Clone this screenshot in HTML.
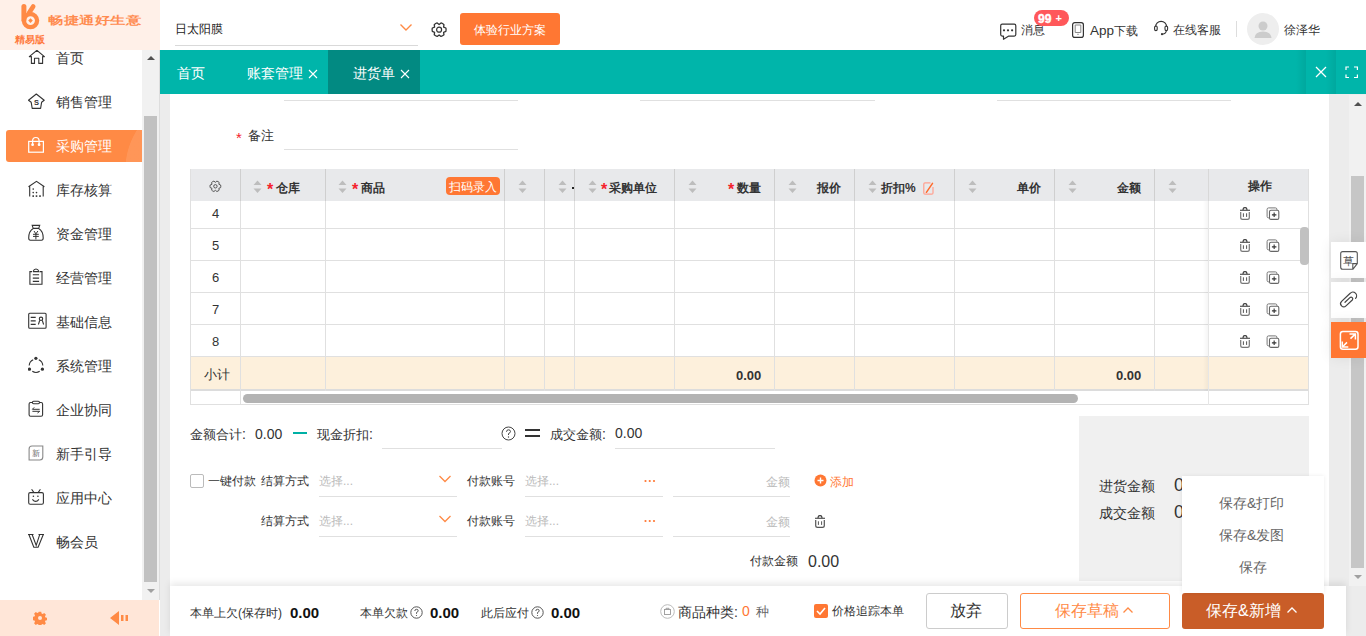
<!DOCTYPE html>
<html><head><meta charset="utf-8">
<style>
*{box-sizing:border-box;margin:0;padding:0}
html,body{width:1366px;height:636px;overflow:hidden;background:#ececec;font-family:"Liberation Sans",sans-serif;color:#333;font-size:14px}
.a{position:absolute}
.t{position:absolute;white-space:nowrap;line-height:1}
/* sidebar */
#side{position:absolute;left:0;top:0;width:160px;height:636px;background:#fff}
#logo{position:absolute;left:0;top:0;width:160px;height:50px;background:#fff0e8}
.mi{position:absolute;left:56px;font-size:14px;color:#333;line-height:1}
.ico{position:absolute;left:28px}
#sbtrack{position:absolute;left:142px;top:50px;width:18px;height:550px;background:#f1f1f1}
#sbthumb{position:absolute;left:144px;top:116px;width:13px;height:466px;background:#c1c1c1}
#sidebot{position:absolute;left:0;top:600px;width:159px;height:36px;background:#ffe6d8}
/* header */
#hdr{position:absolute;left:160px;top:0;width:1206px;height:50px;background:#fff}
#tabs{position:absolute;left:160px;top:50px;width:1206px;height:44px;background:#00b5aa}
#card{position:absolute;left:170px;top:94px;width:1159px;height:541px;background:#fff}
.ul{position:absolute;height:1px;background:#ddd}
/* table */
#tbl{position:absolute;left:190px;top:169px;width:1119px;height:236px;border:1px solid #e0e0e0;background:#fff}
.hrow{position:absolute;left:0;top:0;width:1119px;height:32px;background:#e8e9eb}
.vl{position:absolute;width:1px;background:#dadada}
.hl{position:absolute;height:1px;background:#e0e0e0}
.sort{position:absolute;width:8px;height:14px}
.hd{position:absolute;font-size:12px;font-weight:bold;color:#333;line-height:1}
.req{color:#f5222d}
</style></head>
<body>
<div id="side">
  <div id="logo">
    <svg class="a" style="left:15px;top:2px" width="30" height="32" viewBox="0 0 30 32">
      <g fill="none" stroke="#ff8a45" stroke-linecap="round">
        <path d="M8.9 4.6 V18" stroke-width="5"/>
        <path d="M18.2 4.4 L14 11" stroke-width="4.6"/>
        <circle cx="15.5" cy="18.6" r="6.6" stroke-width="4.3"/>
      </g>
      <path d="M15.5 16.3 L17.8 18.6 L15.5 20.9 L13.2 18.6Z" fill="#ff8a45"/>
    </svg>
    <div class="t" style="left:15px;top:34.5px;font-size:10px;font-weight:bold;color:#ff7a3d">精易版</div>
    <div class="t" style="left:48px;top:13px;font-size:15px;font-weight:bold;color:#ff8c50;letter-spacing:0.5px;transform:scaleY(0.72);transform-origin:50% 50%">畅捷通好生意</div>
  </div>
  <div class="a" style="left:0;top:50px;width:142px;height:550px;overflow:hidden">
    <div class="a" style="left:6px;top:80px;width:136px;height:32px;border-radius:3px 0 0 3px;background:radial-gradient(circle 75px at 194px 40px,rgba(255,255,255,0.1) 99%,rgba(255,255,255,0) 100%),#ff8a45"></div>
    <svg class="a" style="left:28px;top:0" width="20" height="550" viewBox="0 0 20 550" fill="none" stroke="#333" stroke-width="1.1">
      <path d="M1.3 6.6 L8.9 0.3 L16.4 6.6 H14.6 V13.4 H10.8 V8.2 H6.5 V13.4 H3.4 V6.6 Z" stroke-linejoin="round"/>
      <path d="M8.3 44 L0.5 50.2 L3.2 52.3 L4.2 58.4 H12.6 L13.6 52.3 L16.2 50.2 Z" stroke-linejoin="round"/><text x="8.4" y="54.6" font-size="7.5" text-anchor="middle" fill="#333" stroke="none" font-weight="bold">S</text>
      <g stroke="#fff" stroke-width="1.2"><rect x="0.7" y="91.4" width="14.7" height="10.8"/><path d="M4.6 94.7 V91 Q4.6 87.5 7.9 87.5 Q11.1 87.5 11.1 91 V94.7"/><circle cx="4.6" cy="94.7" r="0.8" fill="#fff"/><circle cx="11.1" cy="94.7" r="0.8" fill="#fff"/></g>
      <path d="M0.5 136.8 L8.5 131.3 L16.4 136.8 M1.7 136.5 V146.5 M15.2 136.5 V146.5"/>
      <g fill="#333" stroke="none"><circle cx="5.2" cy="139.1" r="0.8"/><circle cx="5.2" cy="142.6" r="0.8"/><circle cx="8.5" cy="142.6" r="0.8"/><rect x="4.4" y="145.3" width="1.6" height="1.6"/><rect x="7.7" y="145.3" width="1.6" height="1.6"/><rect x="11.2" y="145.3" width="1.6" height="1.6"/></g>
      <path d="M4.2 175.4 H11.7 L10.7 178.4 Q15.2 181 15.2 188 Q15.2 190.2 13.5 190.2 H2.4 Q0.7 190.2 0.7 188 Q0.7 181 5.2 178.4 Z M5.2 178.4 H10.7"/>
      <path d="M6 181 L7.9 183.9 L9.9 181 M7.9 183.9 V189.4 M5 184.3 H10.8 M5 186.4 H10.8" stroke-width="1"/>
      <path d="M4 221.6 H1.9 V234.2 H14 V221.6 H12 M5 221.6 H11 Q10 219 8 219 Q6 219 5 221.6 M4.8 224.8 H11.1 M4.8 228.1 H11.1 M4.8 231.4 H11.1"/>
      <rect x="0.7" y="263.3" width="17.4" height="14.9" rx="1"/><path d="M2.7 267.4 H7.7 M2.7 270.9 H7.7 M2.7 274.4 H7.7 M11.7 270.4 L10.4 274.5 M14.3 270.4 L15.6 274.5"/><circle cx="13" cy="268.8" r="1.7"/>
      <path d="M5.2 309.7 A6.8 6.8 0 0 0 1.2 315.5 M10.8 309.7 A6.8 6.8 0 0 1 14.8 315.5 M4.3 321.3 A6.8 6.8 0 0 0 11.7 321.3"/>
      <g fill="#333" stroke="none"><circle cx="7.9" cy="308.3" r="1.6"/><circle cx="1.5" cy="319.2" r="1.6"/><circle cx="14.4" cy="319.2" r="1.6"/></g>
      <rect x="1.1" y="352.5" width="13.5" height="13.7" rx="1.5"/><rect x="4.4" y="351.3" width="7.1" height="2.5" rx="1.2" fill="#fff"/><path d="M4.4 359.3 H11.7 M4.4 359.3 L6.2 357.4 M4.4 361.3 H11.7 L9.5 363" stroke-width="1"/>
      <path d="M4 396 H14.8 V407 Q14.8 410 11.8 410 H1.1 V399 Q1.1 396 4 396Z" stroke="#888"/><text x="8" y="406.3" font-size="8" text-anchor="middle" fill="#666" stroke="none">新</text>
      <rect x="0.7" y="442.6" width="14.7" height="11.6" rx="1.5"/><path d="M3.6 439.3 L6 442.6 M12.4 439.3 L10.1 442.6 M4.4 449.3 Q7.7 453.5 10.9 449.3"/><g fill="#333" stroke="none"><circle cx="5.4" cy="446.3" r="0.8"/><circle cx="9.9" cy="446.3" r="0.8"/></g>
      <path d="M0 484.5 H5.5 M10.5 484.5 H16 M0.9 484.5 L5.8 497.3 H10.1 L15.3 484.5 M4.2 484.7 L8.2 495.4 L11.7 484.7"/>
    </svg>
    <div class="mi" style="top:1px">首页</div>
    <div class="mi" style="top:45px">销售管理</div>
    <div class="mi" style="top:89px;color:#fff">采购管理</div>
    <div class="mi" style="top:133px">库存核算</div>
    <div class="mi" style="top:177px">资金管理</div>
    <div class="mi" style="top:221px">经营管理</div>
    <div class="mi" style="top:265px">基础信息</div>
    <div class="mi" style="top:309px">系统管理</div>
    <div class="mi" style="top:353px">企业协同</div>
    <div class="mi" style="top:397px">新手引导</div>
    <div class="mi" style="top:441px">应用中心</div>
    <div class="mi" style="top:485px">畅会员</div>
  </div>
  <div id="sbtrack"></div>
  <div id="sbthumb"></div>
  <svg class="a" style="left:144px;top:52px" width="14" height="12"><path d="M3 8 L7 4 L11 8Z" fill="#505050"/></svg>
  <svg class="a" style="left:144px;top:585px" width="14" height="12"><path d="M3 4 L7 8 L11 4Z" fill="#a0a0a0"/></svg>
  <div class="a" style="left:159px;top:50px;width:1px;height:550px;background:#dddddd"></div>
  <div id="sidebot">
    <svg class="a" style="left:33px;top:11px" width="14" height="14" viewBox="0 0 16 16"><path fill="#ff8a45" d="M6.6 0.8h2.8l.4 2 1.3.6 1.7-1.1 2 2-1.1 1.7.6 1.3 2 .4v2.8l-2 .4-.6 1.3 1.1 1.7-2 2-1.7-1.1-1.3.6-.4 2H6.6l-.4-2-1.3-.6-1.7 1.1-2-2 1.1-1.7-.6-1.3-2-.4V6.6l2-.4.6-1.3-1.1-1.7 2-2 1.7 1.1 1.3-.6z"/><circle cx="8" cy="8" r="2.3" fill="#ffe6d8"/></svg>
    <svg class="a" style="left:110px;top:11px" width="19" height="14" viewBox="0 0 19 14"><path fill="#ff8a45" d="M0 7 L9 0 V14Z M11 4 h2.5 v6 H11z M15.5 4 h2.5 v6 h-2.5z"/></svg>
  </div>
</div>
<div id="hdr">
  <div class="t" style="left:15px;top:23px;font-size:12px;color:#222">日太阳膜</div>
  <div class="ul" style="left:15px;top:45px;width:243px;background:#d9d9d9"></div>
  <svg class="a" style="left:239px;top:21px" width="14" height="12"><path d="M1.5 3.5 L7 9 L12.5 3.5" fill="none" stroke="#ff8a45" stroke-width="1.4"/></svg>
  <svg class="a" style="left:270px;top:20.5px" width="18" height="18" viewBox="0 0 18 18"><path d="M15.89 7.01 A7.0 7.0 0 0 1 15.89 10.39 L13.60 11.30 L13.96 13.74 A7.0 7.0 0 0 1 11.03 15.43 L9.10 13.90 L7.17 15.43 A7.0 7.0 0 0 1 4.24 13.74 L4.60 11.30 L2.31 10.39 A7.0 7.0 0 0 1 2.31 7.01 L4.60 6.10 L4.24 3.66 A7.0 7.0 0 0 1 7.17 1.97 L9.10 3.50 L11.03 1.97 A7.0 7.0 0 0 1 13.96 3.66 L13.60 6.10 Z" fill="none" stroke="#333" stroke-width="1.3" stroke-linejoin="round"/><circle cx="9.1" cy="8.7" r="2.5" fill="none" stroke="#333" stroke-width="1.2"/></svg>
  <div class="a" style="left:300px;top:13px;width:100px;height:32px;border-radius:3px;background:#ff7733"></div>
  <div class="t" style="left:314px;top:24px;font-size:12px;color:#fff">体验行业方案</div>

  <!-- right -->
  <svg class="a" style="left:839px;top:22px" width="19" height="19" viewBox="0 0 19 19"><path d="M3.2 2.2 H15.3 Q16.8 2.2 16.8 3.7 V12.6 Q16.8 14.1 15.3 14.1 H9.8 L4.5 17.3 V14.1 H3.2 Q1.7 14.1 1.7 12.6 V3.7 Q1.7 2.2 3.2 2.2Z" fill="none" stroke="#333" stroke-width="1.2" stroke-linejoin="round"/><circle cx="5" cy="8.3" r="1.1" fill="#333"/><circle cx="9" cy="8.3" r="1.1" fill="#333"/><circle cx="13.1" cy="8.3" r="1.1" fill="#333"/></svg>
  <div class="t" style="left:861px;top:24px;font-size:12px;color:#333">消息</div>
  <div class="a" style="left:874px;top:10px;width:35px;height:16px;border-radius:8px;background:#ff585a"></div>
  <div class="t" style="left:878px;top:13px;font-size:12px;font-weight:bold;color:#fff;-webkit-text-stroke:0.4px #fff">99</div>
  <div class="t" style="left:895.5px;top:13px;font-size:11px;font-weight:bold;color:#fff">+</div>
  <svg class="a" style="left:910px;top:21px" width="16" height="18" viewBox="0 0 16 18"><rect x="2.6" y="1.6" width="10.8" height="14.8" rx="2.2" fill="none" stroke="#333" stroke-width="1.2"/><path d="M5.2 4 H10.8 V11.5 H5.2Z" fill="none" stroke="#888" stroke-width="1"/><path d="M7 13.3 h2" stroke="#aaa" stroke-width="1"/></svg>
  <div class="t" style="left:930px;top:24px;font-size:12px;color:#333"><span style="font-size:13.5px">App</span>下载</div>
  <svg class="a" style="left:993px;top:20px" width="17" height="17" viewBox="0 0 17 17"><path d="M2.6 6.8 A5.5 5.5 0 0 1 13.6 6.8" fill="none" stroke="#333" stroke-width="1.2"/><rect x="1.6" y="6" width="2.6" height="4.6" rx="1.3" fill="none" stroke="#333" stroke-width="1.1"/><rect x="12" y="6" width="2.6" height="4.6" rx="1.3" fill="none" stroke="#333" stroke-width="1.1"/><path d="M13.3 10.8 Q13 13.8 9.5 14.2" fill="none" stroke="#333" stroke-width="1.1"/><circle cx="9" cy="14.2" r="1.1" fill="#333"/></svg>
  <div class="t" style="left:1013px;top:24px;font-size:12px;color:#333">在线客服</div>
  <div class="a" style="left:1076px;top:21px;width:1px;height:16px;background:#ddd"></div>
  <div class="a" style="left:1087px;top:13px;width:32px;height:32px;border-radius:50%;background:#eee;overflow:hidden">
    <svg width="32" height="32" viewBox="0 0 32 32"><circle cx="16" cy="13" r="4.5" fill="#ccc"/><path d="M7.5 25 Q8 18.5 16 18.5 Q24 18.5 24.5 25 Z" fill="#ccc"/></svg>
  </div>
  <div class="t" style="left:1124px;top:24px;font-size:12px;color:#333">徐泽华</div>
</div>
<div id="tabs">
  <div class="t" style="left:17px;top:16px;font-size:14px;color:#fff">首页</div>
  <div class="t" style="left:87px;top:16px;font-size:14px;color:#fff">账套管理</div>
  <svg class="a" style="left:148px;top:19px" width="11" height="11"><path d="M1 1 L9 9 M9 1 L1 9" stroke="#fff" stroke-width="1.1"/></svg>
  <div class="a" style="left:168px;top:0;width:92px;height:45px;background:#028a82"></div>
  <div class="t" style="left:193px;top:16px;font-size:14px;color:#fff">进货单</div>
  <svg class="a" style="left:240px;top:19px" width="11" height="11"><path d="M1 1 L9 9 M9 1 L1 9" stroke="#fff" stroke-width="1.1"/></svg>
  <div class="a" style="left:1136px;top:0;width:10px;height:44px;background:linear-gradient(90deg,rgba(0,0,0,0),rgba(0,0,0,0.07))"></div>
  <div class="a" style="left:1166px;top:0;width:10px;height:44px;background:linear-gradient(90deg,rgba(0,0,0,0),rgba(0,0,0,0.07))"></div>
  <svg class="a" style="left:1155px;top:16px" width="12" height="12"><path d="M1 1 L11 11 M11 1 L1 11" stroke="#fff" stroke-width="1.3"/></svg>
  <svg class="a" style="left:1185px;top:16px" width="14" height="14"><path d="M1 4 V1 H4 M9 1 H12.4 V4 M12.4 8.5 V11.5 H9 M4 11.5 H1 V8.5" fill="none" stroke="#fff" stroke-width="1.2"/></svg>
</div>
<div id="card"></div>
<div class="ul" style="left:284px;top:100px;width:234px;background:#e0e0e0"></div>
<div class="ul" style="left:640px;top:100px;width:235px;background:#e0e0e0"></div>
<div class="ul" style="left:997px;top:100px;width:234px;background:#e0e0e0"></div>
<div class="t" style="left:236px;top:130px;font-size:15px;color:#f5222d">*</div>
<div class="t" style="left:248px;top:129.5px;font-size:12.5px;color:#333">备注</div>
<div class="ul" style="left:284px;top:149px;width:234px;background:#e0e0e0"></div>
<div class="a" style="left:190px;top:169px;width:1119px;height:32px;background:#e8e9eb"></div>
<div class="a" style="left:190px;top:357px;width:1119px;height:33px;background:#fdf0dc"></div>
<div class="hl" style="left:190px;top:228px;width:1119px"></div>
<div class="hl" style="left:190px;top:260px;width:1119px"></div>
<div class="hl" style="left:190px;top:292px;width:1119px"></div>
<div class="hl" style="left:190px;top:324px;width:1119px"></div>
<div class="hl" style="left:190px;top:356px;width:1119px"></div>
<div class="a" style="left:190px;top:389px;width:1119px;height:2px;background:#dcdcdc"></div>
<div class="hl" style="left:190px;top:404px;width:1119px"></div>
<div class="vl" style="left:190px;top:169px;height:236px;background:#e0e0e0"></div>
<div class="vl" style="left:240px;top:169px;height:32px;background:#cfcfcf"></div>
<div class="vl" style="left:240px;top:201px;height:204px;background:#e0e0e0"></div>
<div class="vl" style="left:325px;top:169px;height:32px;background:#cfcfcf"></div>
<div class="vl" style="left:325px;top:201px;height:190px;background:#e0e0e0"></div>
<div class="vl" style="left:504px;top:169px;height:32px;background:#cfcfcf"></div>
<div class="vl" style="left:504px;top:201px;height:190px;background:#e0e0e0"></div>
<div class="vl" style="left:544px;top:169px;height:32px;background:#cfcfcf"></div>
<div class="vl" style="left:544px;top:201px;height:190px;background:#e0e0e0"></div>
<div class="vl" style="left:574px;top:169px;height:32px;background:#cfcfcf"></div>
<div class="vl" style="left:574px;top:201px;height:190px;background:#e0e0e0"></div>
<div class="vl" style="left:674px;top:169px;height:32px;background:#cfcfcf"></div>
<div class="vl" style="left:674px;top:201px;height:190px;background:#e0e0e0"></div>
<div class="vl" style="left:774px;top:169px;height:32px;background:#cfcfcf"></div>
<div class="vl" style="left:774px;top:201px;height:190px;background:#e0e0e0"></div>
<div class="vl" style="left:854px;top:169px;height:32px;background:#cfcfcf"></div>
<div class="vl" style="left:854px;top:201px;height:190px;background:#e0e0e0"></div>
<div class="vl" style="left:954px;top:169px;height:32px;background:#cfcfcf"></div>
<div class="vl" style="left:954px;top:201px;height:190px;background:#e0e0e0"></div>
<div class="vl" style="left:1054px;top:169px;height:32px;background:#cfcfcf"></div>
<div class="vl" style="left:1054px;top:201px;height:190px;background:#e0e0e0"></div>
<div class="vl" style="left:1154px;top:169px;height:32px;background:#cfcfcf"></div>
<div class="vl" style="left:1154px;top:201px;height:190px;background:#e0e0e0"></div>
<div class="vl" style="left:1208px;top:169px;height:32px;background:#d8d8d8"></div>
<div class="vl" style="left:1208px;top:201px;height:204px;background:#e6e6e6"></div>
<div class="vl" style="left:1308px;top:169px;height:236px;background:#e0e0e0"></div>
<svg class="a" style="left:253px;top:180px" width="9" height="14" viewBox="0 0 9 14"><path d="M4.5 0.5 L8.5 5 H0.5Z M0.5 8.5 H8.5 L4.5 13Z" fill="#bdbdbd"/></svg>
<svg class="a" style="left:338px;top:180px" width="9" height="14" viewBox="0 0 9 14"><path d="M4.5 0.5 L8.5 5 H0.5Z M0.5 8.5 H8.5 L4.5 13Z" fill="#bdbdbd"/></svg>
<svg class="a" style="left:518px;top:180px" width="9" height="14" viewBox="0 0 9 14"><path d="M4.5 0.5 L8.5 5 H0.5Z M0.5 8.5 H8.5 L4.5 13Z" fill="#bdbdbd"/></svg>
<svg class="a" style="left:558px;top:180px" width="9" height="14" viewBox="0 0 9 14"><path d="M4.5 0.5 L8.5 5 H0.5Z M0.5 8.5 H8.5 L4.5 13Z" fill="#bdbdbd"/></svg>
<svg class="a" style="left:588px;top:180px" width="9" height="14" viewBox="0 0 9 14"><path d="M4.5 0.5 L8.5 5 H0.5Z M0.5 8.5 H8.5 L4.5 13Z" fill="#bdbdbd"/></svg>
<svg class="a" style="left:688px;top:180px" width="9" height="14" viewBox="0 0 9 14"><path d="M4.5 0.5 L8.5 5 H0.5Z M0.5 8.5 H8.5 L4.5 13Z" fill="#bdbdbd"/></svg>
<svg class="a" style="left:788px;top:180px" width="9" height="14" viewBox="0 0 9 14"><path d="M4.5 0.5 L8.5 5 H0.5Z M0.5 8.5 H8.5 L4.5 13Z" fill="#bdbdbd"/></svg>
<svg class="a" style="left:868px;top:180px" width="9" height="14" viewBox="0 0 9 14"><path d="M4.5 0.5 L8.5 5 H0.5Z M0.5 8.5 H8.5 L4.5 13Z" fill="#bdbdbd"/></svg>
<svg class="a" style="left:968px;top:180px" width="9" height="14" viewBox="0 0 9 14"><path d="M4.5 0.5 L8.5 5 H0.5Z M0.5 8.5 H8.5 L4.5 13Z" fill="#bdbdbd"/></svg>
<svg class="a" style="left:1068px;top:180px" width="9" height="14" viewBox="0 0 9 14"><path d="M4.5 0.5 L8.5 5 H0.5Z M0.5 8.5 H8.5 L4.5 13Z" fill="#bdbdbd"/></svg>
<svg class="a" style="left:1168px;top:180px" width="9" height="14" viewBox="0 0 9 14"><path d="M4.5 0.5 L8.5 5 H0.5Z M0.5 8.5 H8.5 L4.5 13Z" fill="#bdbdbd"/></svg>
<svg class="a" style="left:208px;top:179px" width="14" height="15" viewBox="0 0 14 15"><path d="M12.64 5.99 A5.4 5.4 0 0 1 12.64 8.61 L10.86 9.30 L11.15 11.18 A5.4 5.4 0 0 1 8.89 12.49 L7.40 11.30 L5.91 12.49 A5.4 5.4 0 0 1 3.65 11.18 L3.94 9.30 L2.16 8.61 A5.4 5.4 0 0 1 2.16 5.99 L3.94 5.30 L3.65 3.42 A5.4 5.4 0 0 1 5.91 2.11 L7.40 3.30 L8.89 2.11 A5.4 5.4 0 0 1 11.15 3.42 L10.86 5.30 Z" fill="none" stroke="#555" stroke-width="1" stroke-linejoin="round"/><circle cx="7.4" cy="7.3" r="1.7" fill="none" stroke="#555" stroke-width="1"/></svg>
<div class="hd req" style="left:267px;top:182px;font-size:16px">*</div>
<div class="hd" style="left:276px;top:182px">仓库</div>
<div class="hd req" style="left:352px;top:182px;font-size:16px">*</div>
<div class="hd" style="left:361px;top:182px">商品</div>
<div class="hd req" style="left:601px;top:182px;font-size:16px">*</div>
<div class="hd" style="left:609px;top:182px">采购单位</div>
<div class="hd req" style="left:728px;top:182px;font-size:16px">*</div>
<div class="hd" style="left:737px;top:182px">数量</div>
<div class="hd" style="left:817px;top:182px">报价</div>
<div class="hd" style="left:881px;top:182px">折扣%</div>
<div class="hd" style="left:1017px;top:182px">单价</div>
<div class="hd" style="left:1117px;top:182px">金额</div>
<div class="hd" style="left:1248px;top:179.5px">操作</div>

<div class="a" style="left:446px;top:177px;width:54px;height:18px;border-radius:4px;background:#ff7733"></div>
<div class="t" style="left:449px;top:180.5px;font-size:12px;color:#fff">扫码录入</div>
<div class="a" style="left:572px;top:187px;width:2px;height:2px;background:#222"></div>




<svg class="a" style="left:922px;top:181px" width="13" height="15" viewBox="0 0 13 15"><path d="M8.5 1.8 H3 Q1.8 1.8 1.8 3 V12 Q1.8 13.2 3 13.2 H9.8 Q11 13.2 11 12 V6" fill="none" stroke="#ffa090" stroke-width="1.2"/><path d="M4.4 11.3 L10.5 2.3" stroke="#ff6a2a" stroke-width="1.5" stroke-linecap="round"/></svg>


<div class="a" style="left:1203px;top:201px;width:5px;height:190px;background:linear-gradient(90deg,rgba(0,0,0,0),rgba(0,0,0,0.04))"></div>

<div class="t" style="left:212px;top:207px;font-size:13px;color:#333">4</div>
<svg class="a" style="left:1239px;top:206px" width="12" height="15" viewBox="0 0 12 15"><path d="M1 4.2 H11 M4.1 4.2 V3 Q4.1 1.6 6 1.6 Q7.9 1.6 7.9 3 V4.2" fill="none" stroke="#333" stroke-width="1.1"/><path d="M1.7 6 V11.5 Q1.7 13.4 3.6 13.4 H8.4 Q10.3 13.4 10.3 11.5 V6" fill="none" stroke="#777" stroke-width="1.2"/><path d="M4.4 7.3 V10.9 M7.6 7.3 V10.9" stroke="#555" stroke-width="1"/></svg>
<svg class="a" style="left:1266px;top:206px" width="14" height="15" viewBox="0 0 14 15"><path d="M3.3 11.9 H2.6 Q1.1 11.9 1.1 10.4 V3.4 Q1.1 1.9 2.6 1.9 H9.4 Q10.9 1.9 10.9 3.4 V4" fill="none" stroke="#777" stroke-width="1"/><rect x="3.5" y="4.3" width="9.3" height="9.1" rx="1.5" fill="#fff" stroke="#666" stroke-width="1.1"/><path d="M8.15 6.6 V11.1 M5.9 8.85 H10.4" stroke="#333" stroke-width="1.1"/></svg>
<div class="t" style="left:212px;top:239px;font-size:13px;color:#333">5</div>
<svg class="a" style="left:1239px;top:238px" width="12" height="15" viewBox="0 0 12 15"><path d="M1 4.2 H11 M4.1 4.2 V3 Q4.1 1.6 6 1.6 Q7.9 1.6 7.9 3 V4.2" fill="none" stroke="#333" stroke-width="1.1"/><path d="M1.7 6 V11.5 Q1.7 13.4 3.6 13.4 H8.4 Q10.3 13.4 10.3 11.5 V6" fill="none" stroke="#777" stroke-width="1.2"/><path d="M4.4 7.3 V10.9 M7.6 7.3 V10.9" stroke="#555" stroke-width="1"/></svg>
<svg class="a" style="left:1266px;top:238px" width="14" height="15" viewBox="0 0 14 15"><path d="M3.3 11.9 H2.6 Q1.1 11.9 1.1 10.4 V3.4 Q1.1 1.9 2.6 1.9 H9.4 Q10.9 1.9 10.9 3.4 V4" fill="none" stroke="#777" stroke-width="1"/><rect x="3.5" y="4.3" width="9.3" height="9.1" rx="1.5" fill="#fff" stroke="#666" stroke-width="1.1"/><path d="M8.15 6.6 V11.1 M5.9 8.85 H10.4" stroke="#333" stroke-width="1.1"/></svg>
<div class="t" style="left:212px;top:271px;font-size:13px;color:#333">6</div>
<svg class="a" style="left:1239px;top:270px" width="12" height="15" viewBox="0 0 12 15"><path d="M1 4.2 H11 M4.1 4.2 V3 Q4.1 1.6 6 1.6 Q7.9 1.6 7.9 3 V4.2" fill="none" stroke="#333" stroke-width="1.1"/><path d="M1.7 6 V11.5 Q1.7 13.4 3.6 13.4 H8.4 Q10.3 13.4 10.3 11.5 V6" fill="none" stroke="#777" stroke-width="1.2"/><path d="M4.4 7.3 V10.9 M7.6 7.3 V10.9" stroke="#555" stroke-width="1"/></svg>
<svg class="a" style="left:1266px;top:270px" width="14" height="15" viewBox="0 0 14 15"><path d="M3.3 11.9 H2.6 Q1.1 11.9 1.1 10.4 V3.4 Q1.1 1.9 2.6 1.9 H9.4 Q10.9 1.9 10.9 3.4 V4" fill="none" stroke="#777" stroke-width="1"/><rect x="3.5" y="4.3" width="9.3" height="9.1" rx="1.5" fill="#fff" stroke="#666" stroke-width="1.1"/><path d="M8.15 6.6 V11.1 M5.9 8.85 H10.4" stroke="#333" stroke-width="1.1"/></svg>
<div class="t" style="left:212px;top:303px;font-size:13px;color:#333">7</div>
<svg class="a" style="left:1239px;top:302px" width="12" height="15" viewBox="0 0 12 15"><path d="M1 4.2 H11 M4.1 4.2 V3 Q4.1 1.6 6 1.6 Q7.9 1.6 7.9 3 V4.2" fill="none" stroke="#333" stroke-width="1.1"/><path d="M1.7 6 V11.5 Q1.7 13.4 3.6 13.4 H8.4 Q10.3 13.4 10.3 11.5 V6" fill="none" stroke="#777" stroke-width="1.2"/><path d="M4.4 7.3 V10.9 M7.6 7.3 V10.9" stroke="#555" stroke-width="1"/></svg>
<svg class="a" style="left:1266px;top:302px" width="14" height="15" viewBox="0 0 14 15"><path d="M3.3 11.9 H2.6 Q1.1 11.9 1.1 10.4 V3.4 Q1.1 1.9 2.6 1.9 H9.4 Q10.9 1.9 10.9 3.4 V4" fill="none" stroke="#777" stroke-width="1"/><rect x="3.5" y="4.3" width="9.3" height="9.1" rx="1.5" fill="#fff" stroke="#666" stroke-width="1.1"/><path d="M8.15 6.6 V11.1 M5.9 8.85 H10.4" stroke="#333" stroke-width="1.1"/></svg>
<div class="t" style="left:212px;top:335px;font-size:13px;color:#333">8</div>
<svg class="a" style="left:1239px;top:334px" width="12" height="15" viewBox="0 0 12 15"><path d="M1 4.2 H11 M4.1 4.2 V3 Q4.1 1.6 6 1.6 Q7.9 1.6 7.9 3 V4.2" fill="none" stroke="#333" stroke-width="1.1"/><path d="M1.7 6 V11.5 Q1.7 13.4 3.6 13.4 H8.4 Q10.3 13.4 10.3 11.5 V6" fill="none" stroke="#777" stroke-width="1.2"/><path d="M4.4 7.3 V10.9 M7.6 7.3 V10.9" stroke="#555" stroke-width="1"/></svg>
<svg class="a" style="left:1266px;top:334px" width="14" height="15" viewBox="0 0 14 15"><path d="M3.3 11.9 H2.6 Q1.1 11.9 1.1 10.4 V3.4 Q1.1 1.9 2.6 1.9 H9.4 Q10.9 1.9 10.9 3.4 V4" fill="none" stroke="#777" stroke-width="1"/><rect x="3.5" y="4.3" width="9.3" height="9.1" rx="1.5" fill="#fff" stroke="#666" stroke-width="1.1"/><path d="M8.15 6.6 V11.1 M5.9 8.85 H10.4" stroke="#333" stroke-width="1.1"/></svg>
<div class="t" style="left:204px;top:368px;font-size:13px;color:#333">小计</div>
<div class="t" style="left:736px;top:369px;font-size:13px;font-weight:bold;color:#333">0.00</div>
<div class="t" style="left:1116px;top:369px;font-size:13px;font-weight:bold;color:#333">0.00</div>
<div class="a" style="left:243px;top:394px;width:835px;height:9px;border-radius:5px;background:#b3b3b3"></div>
<div class="a" style="left:1300px;top:227px;width:9px;height:38px;border-radius:4px;background:#c1c1c1"></div>
<!-- summary -->
<div class="t" style="left:190px;top:427px;font-size:13.4px;color:#333">金额合计<span style="font-size:14px">:</span></div>
<div class="t" style="left:255px;top:427px;font-size:14px;color:#333">0.00</div>
<div class="a" style="left:293px;top:432px;width:14px;height:2px;background:#00b0a5"></div>
<div class="t" style="left:317px;top:427px;font-size:13.4px;color:#333">现金折扣<span style="font-size:14px">:</span></div>
<div class="ul" style="left:382px;top:448px;width:120px;background:#e0e0e0"></div>
<svg class="a" style="left:501px;top:426px" width="15" height="15" viewBox="0 0 15 15"><circle cx="7.5" cy="7.5" r="6.5" fill="none" stroke="#444" stroke-width="1"/><path d="M5.5 5.8 Q5.5 3.8 7.5 3.8 Q9.5 3.8 9.5 5.6 Q9.5 6.8 7.5 7.6 V9" fill="none" stroke="#444" stroke-width="1"/><circle cx="7.5" cy="11" r="0.7" fill="#444"/></svg>
<div class="a" style="left:525px;top:429px;width:15px;height:2px;background:#333"></div>
<div class="a" style="left:525px;top:435px;width:15px;height:2px;background:#333"></div>
<div class="t" style="left:550px;top:427px;font-size:13.4px;color:#333">成交金额<span style="font-size:14px">:</span></div>
<div class="t" style="left:615px;top:426px;font-size:14px;color:#333">0.00</div>
<div class="ul" style="left:615px;top:448px;width:160px;background:#e0e0e0"></div>

<!-- payment rows -->
<div class="a" style="left:190px;top:474px;width:14px;height:14px;border:1px solid #bbb;border-radius:2px;background:#fff"></div>
<div class="t" style="left:208px;top:475px;font-size:12px;color:#333">一键付款</div>
<div class="t" style="left:261px;top:475px;font-size:12px;color:#333">结算方式</div>
<div class="t" style="left:319px;top:475px;font-size:12px;color:#bbb">选择...</div>
<svg class="a" style="left:438px;top:474px" width="14" height="10"><path d="M1.5 2 L7 7.5 L12.5 2" fill="none" stroke="#ff8a45" stroke-width="1.3"/></svg>
<div class="ul" style="left:319px;top:496px;width:138px;background:#e0e0e0"></div>
<div class="t" style="left:467px;top:475px;font-size:12px;color:#333">付款账号</div>
<div class="t" style="left:525px;top:475px;font-size:12px;color:#bbb">选择...</div>
<svg class="a" style="left:644px;top:479px" width="12" height="4"><circle cx="1.5" cy="2" r="1.1" fill="#ff7733"/><circle cx="5.75" cy="2" r="1.1" fill="#ff7733"/><circle cx="10" cy="2" r="1.1" fill="#ff7733"/></svg>
<div class="ul" style="left:525px;top:496px;width:138px;background:#e0e0e0"></div>
<div class="t" style="left:766px;top:476px;font-size:12px;color:#bbb">金额</div>
<div class="ul" style="left:673px;top:496px;width:117px;background:#e0e0e0"></div>
<svg class="a" style="left:814px;top:474px" width="13" height="13"><circle cx="6.5" cy="6.5" r="6" fill="#ff7733"/><path d="M6.5 3.5 V9.5 M3.5 6.5 H9.5" stroke="#fff" stroke-width="1.4"/></svg>
<div class="t" style="left:830px;top:476px;font-size:12px;color:#ff7733">添加</div>

<div class="t" style="left:261px;top:515px;font-size:12px;color:#333">结算方式</div>
<div class="t" style="left:319px;top:515px;font-size:12px;color:#bbb">选择...</div>
<svg class="a" style="left:438px;top:514px" width="14" height="10"><path d="M1.5 2 L7 7.5 L12.5 2" fill="none" stroke="#ff8a45" stroke-width="1.3"/></svg>
<div class="ul" style="left:319px;top:536px;width:138px;background:#e0e0e0"></div>
<div class="t" style="left:467px;top:515px;font-size:12px;color:#333">付款账号</div>
<div class="t" style="left:525px;top:515px;font-size:12px;color:#bbb">选择...</div>
<svg class="a" style="left:644px;top:519px" width="12" height="4"><circle cx="1.5" cy="2" r="1.1" fill="#ff7733"/><circle cx="5.75" cy="2" r="1.1" fill="#ff7733"/><circle cx="10" cy="2" r="1.1" fill="#ff7733"/></svg>
<div class="ul" style="left:525px;top:536px;width:138px;background:#e0e0e0"></div>
<div class="t" style="left:766px;top:516px;font-size:12px;color:#bbb">金额</div>
<div class="ul" style="left:673px;top:536px;width:117px;background:#e0e0e0"></div>
<svg class="a" style="left:814px;top:514px" width="12" height="15" viewBox="0 0 12 15"><path d="M1 4.2 H11 M4.1 4.2 V3 Q4.1 1.6 6 1.6 Q7.9 1.6 7.9 3 V4.2" fill="none" stroke="#333" stroke-width="1.1"/><path d="M1.7 6 V11.5 Q1.7 13.4 3.6 13.4 H8.4 Q10.3 13.4 10.3 11.5 V6" fill="none" stroke="#555" stroke-width="1.2"/><path d="M4.4 7.3 V10.9 M7.6 7.3 V10.9" stroke="#555" stroke-width="1"/></svg>

<div class="t" style="left:750px;top:555px;font-size:12px;color:#333">付款金额</div>
<div class="t" style="left:808px;top:554px;font-size:16px;color:#333">0.00</div>

<!-- right summary box -->
<div class="a" style="left:1079px;top:416px;width:230px;height:165px;background:#f0f0f0"></div>
<div class="t" style="left:1099px;top:479px;font-size:14px;color:#333">进货金额</div>
<div class="t" style="left:1174px;top:476px;font-size:18px;color:#333">0</div>
<div class="t" style="left:1099px;top:506px;font-size:14px;color:#333">成交金额</div>
<div class="t" style="left:1174px;top:503px;font-size:18px;color:#333">0</div>

<!-- bottom bar -->
<div class="a" style="left:170px;top:586px;width:1176px;height:50px;background:#fff;box-shadow:0 -3px 7px rgba(0,0,0,0.09)"></div>
<div class="t" style="left:190px;top:607px;font-size:12px;color:#333">本单上欠(保存时)</div>
<div class="t" style="left:290px;top:605px;font-size:15px;font-weight:bold;color:#111">0.00</div>
<div class="t" style="left:360px;top:607px;font-size:12px;color:#333">本单欠款</div>
<svg class="a" style="left:410px;top:606px" width="13" height="13" viewBox="0 0 13 13"><circle cx="6.5" cy="6.5" r="5.7" fill="none" stroke="#555" stroke-width="1"/><path d="M4.8 5 Q4.8 3.3 6.5 3.3 Q8.2 3.3 8.2 4.8 Q8.2 5.8 6.5 6.5 V7.8" fill="none" stroke="#555" stroke-width="1"/><circle cx="6.5" cy="9.5" r="0.6" fill="#555"/></svg>
<div class="t" style="left:430px;top:605px;font-size:15px;font-weight:bold;color:#111">0.00</div>
<div class="t" style="left:481px;top:607px;font-size:12px;color:#333">此后应付</div>
<svg class="a" style="left:531px;top:606px" width="13" height="13" viewBox="0 0 13 13"><circle cx="6.5" cy="6.5" r="5.7" fill="none" stroke="#555" stroke-width="1"/><path d="M4.8 5 Q4.8 3.3 6.5 3.3 Q8.2 3.3 8.2 4.8 Q8.2 5.8 6.5 6.5 V7.8" fill="none" stroke="#555" stroke-width="1"/><circle cx="6.5" cy="9.5" r="0.6" fill="#555"/></svg>
<div class="t" style="left:551px;top:605px;font-size:15px;font-weight:bold;color:#111">0.00</div>
<svg class="a" style="left:660px;top:604px" width="15" height="15" viewBox="0 0 15 15"><circle cx="7.5" cy="7.5" r="6.8" fill="none" stroke="#bbb" stroke-width="1"/><rect x="4.5" y="5.5" width="6" height="5" fill="none" stroke="#999" stroke-width="0.9"/><path d="M6 5.5 V4.3 H9 V5.5" fill="none" stroke="#999" stroke-width="0.9"/></svg>
<div class="t" style="left:678px;top:605px;font-size:13.5px;color:#333">商品种类<span style="font-size:14px">:</span></div>
<div class="t" style="left:742px;top:604px;font-size:14px;color:#ff7733">0</div>
<div class="t" style="left:756px;top:605px;font-size:13px;color:#666">种</div>
<div class="a" style="left:814px;top:604px;width:14px;height:14px;border-radius:2px;background:#ff7733"></div>
<svg class="a" style="left:814px;top:604px" width="14" height="14"><path d="M3 7 L6 10 L11 4" fill="none" stroke="#fff" stroke-width="1.6"/></svg>
<div class="t" style="left:832px;top:605px;font-size:12px;color:#333">价格追踪本单</div>
<div class="a" style="left:926px;top:593px;width:82px;height:36px;border:1px solid #ccc;border-radius:3px;background:#fff"></div>
<div class="t" style="left:950px;top:603px;font-size:16px;color:#333">放弃</div>
<div class="a" style="left:1020px;top:593px;width:150px;height:36px;border:1px solid #ff8a45;border-radius:3px;background:#fff"></div>
<div class="t" style="left:1055px;top:603px;font-size:16px;color:#ff8a45">保存草稿</div>
<svg class="a" style="left:1122px;top:605px" width="12" height="10"><path d="M1.5 7.5 L6 3 L10.5 7.5" fill="none" stroke="#ff8a45" stroke-width="1.3"/></svg>
<div class="a" style="left:1182px;top:593px;width:142px;height:36px;border-radius:3px;background:#c95d28"></div>
<div class="t" style="left:1206px;top:603px;font-size:16px;color:#fff">保存&amp;新增</div>
<svg class="a" style="left:1286px;top:605px" width="12" height="10"><path d="M1.5 7.5 L6 3 L10.5 7.5" fill="none" stroke="#fff" stroke-width="1.3"/></svg>

<!-- popover -->
<div class="a" style="left:1182px;top:476px;width:142px;height:117px;background:#fff;box-shadow:0 0 4px rgba(0,0,0,0.08)"></div>
<div class="t" style="left:1219px;top:496px;font-size:14px;color:#666">保存&amp;打印</div>
<div class="t" style="left:1219px;top:528px;font-size:14px;color:#666">保存&amp;发图</div>
<div class="t" style="left:1239px;top:560px;font-size:14px;color:#666">保存</div>

<!-- right scrollbar -->
<div class="a" style="left:1349px;top:95px;width:17px;height:491px;background:#f1f1f1"></div>
<div class="a" style="left:1351px;top:176px;width:13px;height:392px;background:#c6c6c6"></div>
<svg class="a" style="left:1350px;top:98px" width="16" height="12"><path d="M4 8 L8 4 L12 8Z" fill="#505050"/></svg>
<svg class="a" style="left:1350px;top:571px" width="16" height="12"><path d="M4 4 L8 8 L12 4Z" fill="#a0a0a0"/></svg>

<!-- floating buttons -->
<div class="a" style="left:1331px;top:242px;width:35px;height:36px;background:#fff;box-shadow:0 0 14px rgba(0,0,0,0.07)"></div>
<svg class="a" style="left:1340px;top:251px" width="19" height="20" viewBox="0 0 19 20"><path d="M2.7 0.6 H15.3 Q17.3 0.6 17.3 2.6 V12.6 L12.8 18.3 H2.7 Q0.7 18.3 0.7 16.3 V2.6 Q0.7 0.6 2.7 0.6Z M17.3 12.6 H12.8 V18.3" fill="none" stroke="#555" stroke-width="1.1" stroke-linejoin="round"/><text x="8.8" y="13.6" font-size="10.5" text-anchor="middle" fill="#555">草</text></svg>
<div class="a" style="left:1331px;top:282px;width:35px;height:36px;background:#fff;box-shadow:0 0 14px rgba(0,0,0,0.07)"></div>
<svg class="a" style="left:1338px;top:288px" width="20" height="22" viewBox="0 0 20 22"><path d="M17.6 10.3 A3.6 3.6 0 0 0 12.2 5.3 L3.6 13.4 A3.1 3.1 0 0 0 8 17.9 L14.3 12 A1.7 1.7 0 0 0 11.9 9.6 L7 14.3" fill="none" stroke="#444" stroke-width="1.2" stroke-linecap="round"/></svg>
<div class="a" style="left:1331px;top:322px;width:35px;height:36px;background:#ff7733;box-shadow:0 0 14px rgba(0,0,0,0.07)"></div>
<svg class="a" style="left:1338px;top:329px" width="22" height="22" viewBox="0 0 22 22"><rect x="2.4" y="2.6" width="17.6" height="17.6" rx="2.5" fill="none" stroke="#fff" stroke-width="1.5"/><path d="M11.5 4.9 H17.4 V10.5 M17.4 4.9 L12.5 9.6 M4.3 12.5 V18 H10.3 M4.3 18 L9 13.4" fill="none" stroke="#fff" stroke-width="1.5"/></svg>

</body></html>
